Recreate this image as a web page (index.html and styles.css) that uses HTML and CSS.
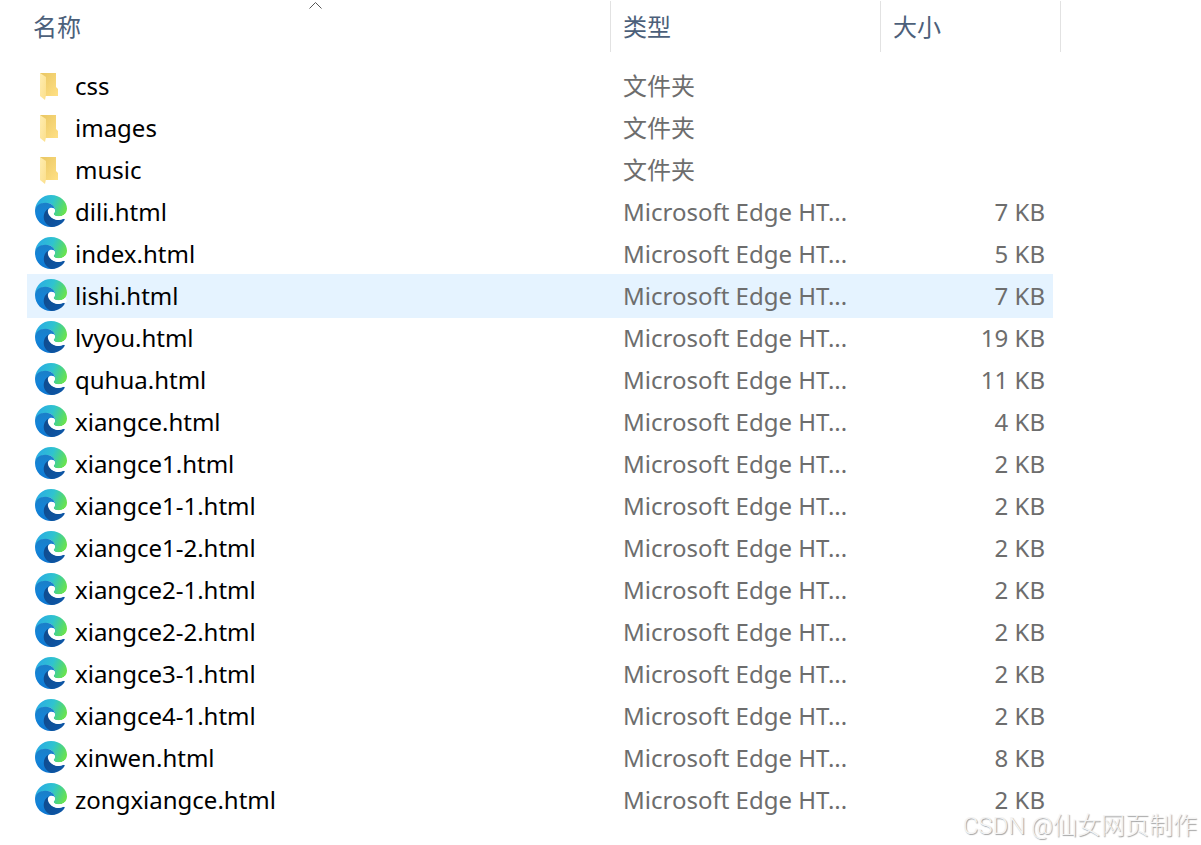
FILE: index.html
```html
<!DOCTYPE html>
<html lang="zh-CN">
<head>
  <meta charset="UTF-8" />
  <meta name="viewport" content="width=device-width, initial-scale=1.0"/>
  <title>文件列表</title>
  <link rel="stylesheet" href="styles.css">
</head>
<body>
  <!-- Shared icons -->
  <svg class="sprite" aria-hidden="true">
    <defs>
      <linearGradient id="folderBack" x1="0" y1="0" x2="1" y2="1">
        <stop offset="0" stop-color="#e9c662"/>
        <stop offset="1" stop-color="#ffe085"/>
      </linearGradient>
      <linearGradient id="folderFront" x1="0" y1="0" x2="1" y2="1">
        <stop offset="0" stop-color="#ffedb0"/>
        <stop offset="1" stop-color="#fbdf8c"/>
      </linearGradient>
      <linearGradient id="edgeTop" x1="0" y1="0.3" x2="1" y2="0.6">
        <stop offset="0" stop-color="#2aa9e6"/>
        <stop offset="0.5" stop-color="#2fc3d0"/>
        <stop offset="0.8" stop-color="#4fd67c"/>
        <stop offset="1" stop-color="#6be34e"/>
      </linearGradient>
      <linearGradient id="edgeSide" x1="0.5" y1="0" x2="0.5" y2="1">
        <stop offset="0" stop-color="#1b7fc8"/>
        <stop offset="0.5" stop-color="#1384d8"/>
        <stop offset="1" stop-color="#0f76d0"/>
      </linearGradient>
      <linearGradient id="edgeBottom" x1="0" y1="0" x2="1" y2="0.6">
        <stop offset="0" stop-color="#114a8b"/>
        <stop offset="1" stop-color="#0d56a6"/>
      </linearGradient>
    </defs>
    <symbol id="folder" viewBox="0 0 32 32">
      <path fill="url(#folderBack)" d="M5 4h16v14l2 2v7H9z"/>
      <path fill="url(#folderFront)" d="M5 4l6 4v18l-1 5-5-4z"/>
    </symbol>
    <symbol id="edge" viewBox="0 0 32 32">
      <path fill="url(#edgeTop)" d="M0 15C.6 6.200 7.500 0 16 0c9.500 0 16 6.500 16 13.500 0 5-3.800 8-8.400 8-3.200 0-5-1.200-5-2.500 0-1 1.400-1.500 1.400-3.800 0-3.600-3.700-7.100-8.500-7.100C6 8.100 1.500 11 0 15z"/>
      <path fill="url(#edgeSide)" d="M0 16c0-4.700 4.700-8.200 10.500-8.200 5.700 0 9.500 3.600 9.500 7.200-1.200-2.500-5-3.200-6.800-.2C10.500 19.500 15 28 23 29.500 21 31.200 18.500 32 16 32 7 32 0 25 0 16z"/>
      <path fill="#ffffff" d="M16.500 13c2.200 0 3.500 1.300 3.500 2.800 0 1.500-1.400 2.200-1.400 3.200 0 1.300 1.800 2.500 5 2.500 3 0 5.500-1.200 7-3l-1 6.500-5 2.500c-6 1-11.600-3.500-11.600-9.500 0-3 1.300-5 3.500-5z"/>
      <path fill="url(#edgeBottom)" d="M13.500 13.500C7 17 6.500 28.500 16.500 31.900 23 32 28 28.500 29.800 24.600c.3-.7-.3-1.100-1-.8C22 27 14 23 12.900 17c-.3-1.500 0-2.700.6-3.500z"/>
      <path fill="#ffffff" d="M30.600 18.500c-1.600 1.900-4 3-7 3-3.200 0-5-1.200-5-2.500l-3 2.500c3 3.800 8.400 4.300 13 2.300 1 0 1.400.4 1.200.8L32 22z"/>
    </symbol>
  </svg>

  <main class="explorer">
    <table class="files">
      <colgroup>
        <col>
        <col class="col-type">
        <col class="col-size">
        <col class="col-end">
      </colgroup>
      <thead>
        <tr>
          <th class="name" scope="col" aria-sort="ascending">
            <svg class="sort" viewBox="0 0 13 8"><path d="M0.500 7.500l6-6 6 6"/></svg>
            名称
          </th>
          <th class="type" scope="col">类型</th>
          <th class="size-head" scope="col" colspan="2">大小</th>
        </tr>
      </thead>
      <tbody id="fileRows"></tbody>
    </table>
  </main>

  <div class="watermark">CSDN @仙女网页制作</div>

  <script>
    const files = [
      ['css'],
      ['images'],
      ['music'],
      ['dili.html', 7],
      ['index.html', 5],
      ['lishi.html', 7],
      ['lvyou.html', 19],
      ['quhua.html', 11],
      ['xiangce.html', 4],
      ['xiangce1.html', 2],
      ['xiangce1-1.html', 2],
      ['xiangce1-2.html', 2],
      ['xiangce2-1.html', 2],
      ['xiangce2-2.html', 2],
      ['xiangce3-1.html', 2],
      ['xiangce4-1.html', 2],
      ['xinwen.html', 8],
      ['zongxiangce.html', 2]
    ];
    const hovered = 'lishi.html';

    document.getElementById('fileRows').innerHTML = files.map(([name, size]) => `
      <tr class="${name === hovered ? 'active' : ''}">
        <td class="name">
          <div class="file">
            <svg class="icon"><use href="#${size ? 'edge' : 'folder'}"/></svg>
            <span>${name}</span>
          </div>
        </td>
        <td class="type">${size ? 'Microsoft Edge HT...' : '文件夹'}</td>
        <td class="size">${size ? size + ' KB' : ''}</td>
      </tr>`).join('');
  </script>
</body>
</html>
```
FILE: styles.css
```css
* {
  box-sizing: border-box;
  margin: 0;
  padding: 0;
}

body {
  background-color: #ffffff;
  font-family: "Noto Sans", "Noto Sans CJK SC", sans-serif;
  font-size: 24px;
  line-height: 42px;
  color: #000000;
  position: relative;
  min-height: 100vh;
}

.sprite {
  position: absolute;
  width: 0;
  height: 0;
}

.explorer {
  padding: 1px 140px 24px 27px;
}

.files {
  width: 100%;
  table-layout: fixed;
  border-collapse: separate;
  border-spacing: 0;
}

.col-type {
  width: 270px;
}

.col-size {
  width: 173px;
}

.col-end {
  width: 8px;
}

th {
  height: 51px;
  padding-top: 1px;
  font-weight: 400;
  text-align: left;
  color: #4c607a;
  position: relative;
}

th.name {
  padding-left: 6px;
}

.type,
.size-head {
  padding-left: 12px;
}

th.type,
.size-head {
  border-left: 1px solid #e2e2e2;
}

.size-head {
  border-right: 1px solid #e2e2e2;
}

.sort {
  position: absolute;
  top: 0;
  left: calc(50% - 10px);
  width: 13px;
  height: 8px;
  fill: none;
  stroke: #555555;
}

/* space between the headings and the first row */
tbody::before {
  content: "";
  display: table-row;
  height: 13px;
}

td {
  height: 42px;
  white-space: nowrap;
}

td.name {
  padding-left: 8px;
}

td.type {
  padding-left: 13px;
}

td.type,
td.size {
  color: #6d6d6d;
}

td.size {
  padding-right: 8px;
  text-align: right;
}

.file {
  display: flex;
  align-items: flex-start;
  gap: 8px;
}

.icon {
  width: 32px;
  height: 32px;
  margin-top: 4px;
}

.active td {
  background-color: #e5f3ff;
  box-shadow: 0 1px #e5f3ff, 0 -1px #e5f3ff;
}

.watermark {
  position: absolute;
  right: 4px;
  bottom: 2px;
  font-family: Roboto, "Noto Sans CJK SC", sans-serif;
  font-weight: 300;
  line-height: 34px;
  color: #f4f4f4;
  text-shadow: 1px 1px 1px #a0a0a0;
}
```
